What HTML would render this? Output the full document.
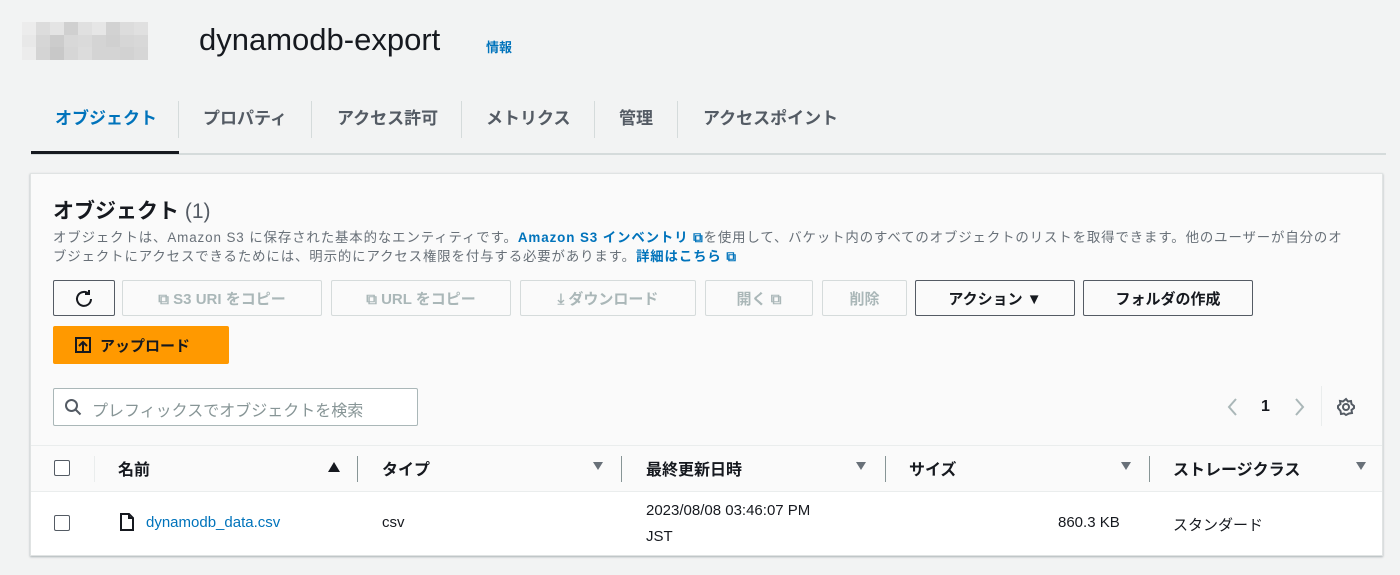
<!DOCTYPE html>
<html><head><meta charset="utf-8"><style>
*{box-sizing:border-box;margin:0;padding:0}
body{width:1400px;height:575px;background:#f2f3f3;font-family:"Liberation Sans","Noto Sans CJK JP",sans-serif;color:#16191f;position:relative;overflow:hidden}
.a{position:absolute}
.blur{left:22px;top:22px;width:126px;height:38px;display:grid;grid-template-columns:repeat(9,1fr);grid-template-rows:repeat(3,1fr)}
.blur i{display:block}
h1{left:199px;top:22px;font-size:31px;font-weight:400;white-space:nowrap}
.info{left:486px;top:37px;font-size:13px;color:#0073bb;font-weight:700}
.tab{top:107px;font-size:17px;font-weight:700;color:#545b64;height:34px;line-height:24px}
.sep{top:101px;width:1px;height:37px;background:#d5dbdb}
.panel{left:30px;top:173px;width:1353px;height:383px;background:#fafafa;border:1px solid #e0e3e3;box-shadow:0 1px 2px rgba(0,28,36,.3)}
.btn{top:280px;height:36px;border:1px solid #d5dbdb;border-radius:2px;font-size:15px;font-weight:700;color:#aab7b8;display:flex;align-items:center;justify-content:center;gap:8px;background:#fafafa}
.btn.on{border-color:#545b64;color:#16191f}
.th{top:456px;font-size:16px;font-weight:700;color:#16191f}
.tri{top:462px;width:0;height:0;border-left:5px solid transparent;border-right:5px solid transparent;border-top:8px solid #687078}
.cs{top:456px;width:1px;height:26px;background:#879596}
.cb{width:16px;height:16px;border:1px solid #545b64;border-radius:2px;background:#fff}
.td{font-size:15px;color:#16191f}
</style></head><body>
<div class="a blur">
<i style="background:#ececec"></i><i style="background:#dcdcdc"></i><i style="background:#e4e4e4"></i><i style="background:#d0d0d0"></i><i style="background:#e0e0e0"></i><i style="background:#e6e6e6"></i><i style="background:#d2d2d2"></i><i style="background:#dcdcdc"></i><i style="background:#e0e0e0"></i>
<i style="background:#e8e8e8"></i><i style="background:#d6d6d6"></i><i style="background:#cccccc"></i><i style="background:#d8d8d8"></i><i style="background:#dadada"></i><i style="background:#d4d4d4"></i><i style="background:#d0d0d0"></i><i style="background:#d6d6d6"></i><i style="background:#d8d8d8"></i>
<i style="background:#ececec"></i><i style="background:#d4d4d4"></i><i style="background:#c8c8c8"></i><i style="background:#d6d6d6"></i><i style="background:#dcdcdc"></i><i style="background:#d4d4d4"></i><i style="background:#d4d4d4"></i><i style="background:#d2d2d2"></i><i style="background:#d6d6d6"></i>
</div>
<h1 class="a">dynamodb-export</h1>
<div class="a info">情報</div>

<div class="a tab" style="left:55px;color:#0073bb">オブジェクト</div>
<div class="a sep" style="left:178px"></div>
<div class="a tab" style="left:203px">プロパティ</div>
<div class="a sep" style="left:311px"></div>
<div class="a tab" style="left:337px">アクセス許可</div>
<div class="a sep" style="left:461px"></div>
<div class="a tab" style="left:486px">メトリクス</div>
<div class="a sep" style="left:594px"></div>
<div class="a tab" style="left:619px">管理</div>
<div class="a sep" style="left:677px"></div>
<div class="a tab" style="left:703px">アクセスポイント</div>
<div class="a" style="left:31px;top:153px;width:1355px;height:2px;background:#d5dbdb"></div>
<div class="a" style="left:31px;top:151px;width:148px;height:3px;background:#16191f"></div>

<div class="a panel"></div>
<div class="a" style="left:53px;top:195px;font-size:21px;font-weight:700">オブジェクト <span style="font-weight:400;color:#545b64">(1)</span></div>
<div class="a" style="left:53px;top:228px;width:1330px;font-size:13.4px;letter-spacing:0.9px;line-height:19px;color:#687078;white-space:nowrap">オブジェクトは、Amazon S3 に保存された基本的なエンティティです。<b style="color:#0073bb">Amazon S3 インベントリ ⧉</b>を使用して、バケット内のすべてのオブジェクトのリストを取得できます。他のユーザーが自分のオ<br>ブジェクトにアクセスできるためには、明示的にアクセス権限を付与する必要があります。<b style="color:#0073bb">詳細はこちら ⧉</b></div>

<div class="a btn on" style="left:53px;width:62px"><svg width="20" height="20" viewBox="0 0 20 20" fill="none" stroke="#16191f" stroke-width="2"><path d="M15 6A7 7 0 1 0 17 11"/><path d="M15 2v4h-4"/></svg></div>
<div class="a btn" style="left:122px;width:200px">⧉ S3 URI をコピー</div>
<div class="a btn" style="left:331px;width:180px">⧉ URL をコピー</div>
<div class="a btn" style="left:520px;width:176px">⤓ ダウンロード</div>
<div class="a btn" style="left:705px;width:108px">開く ⧉</div>
<div class="a btn" style="left:822px;width:85px">削除</div>
<div class="a btn on" style="left:915px;width:160px">アクション ▼</div>
<div class="a btn on" style="left:1083px;width:170px">フォルダの作成</div>
<div class="a btn" style="left:53px;top:326px;width:176px;height:38px;background:#ff9900;border-color:#ff9900;color:#16191f;justify-content:flex-start;padding-left:20px"><svg width="18" height="18" viewBox="0 0 18 18" fill="none" stroke="#16191f" stroke-width="2"><rect x="2" y="2" width="14" height="14"/><path d="M9 15V7M5 10l4-4 4 4"/></svg>アップロード</div>

<div class="a" style="left:53px;top:388px;width:365px;height:38px;border:1px solid #aab7b8;border-radius:2px;background:#fff;font-size:16px;color:#879596;padding:8px 0 0 38px">プレフィックスでオブジェクトを検索</div>
<svg class="a" style="left:64px;top:398px" width="18" height="18" viewBox="0 0 18 18" fill="none" stroke="#545b64" stroke-width="2"><circle cx="7.5" cy="7.5" r="5.5"/><path d="M11.5 11.5l5 5"/></svg>

<svg class="a" style="left:1226px;top:397px" width="14" height="20" viewBox="0 0 14 20" fill="none" stroke="#aab7b8" stroke-width="2"><path d="M10 2L3 10l7 8"/></svg>
<div class="a" style="left:1261px;top:398px;font-size:16px;font-weight:700">1</div>
<svg class="a" style="left:1292px;top:397px" width="14" height="20" viewBox="0 0 14 20" fill="none" stroke="#aab7b8" stroke-width="2"><path d="M4 2l7 8-7 8"/></svg>
<div class="a" style="left:1321px;top:386px;width:1px;height:40px;background:#eaeded"></div>
<svg class="a" style="left:1336px;top:397px" width="20" height="20" viewBox="0 0 20 20" fill="none" stroke="#545b64" stroke-width="2"><circle cx="10" cy="10" r="3"/><path d="M10 2l2 2.5 3-.5.5 3L18 9v2l-2.5 2 .5 3-3 .5L10 18l-2-1.5-3 .5-.5-3L2 11V9l2.5-2L4 4l3 .5z"/></svg>

<div class="a" style="left:31px;top:445px;width:1351px;height:1px;background:#eaeded"></div>
<div class="a" style="left:31px;top:491px;width:1351px;height:64px;background:#fff;border-top:1px solid #eaeded"></div>
<div class="a cb" style="left:54px;top:460px"></div>
<div class="a" style="left:94px;top:456px;width:1px;height:26px;background:#eaeded"></div>
<div class="a th" style="left:118px">名前</div>
<div class="a" style="left:328px;top:462px;border-left:6px solid transparent;border-right:6px solid transparent;border-bottom:10px solid #16191f"></div>
<div class="a cs" style="left:357px"></div>
<div class="a th" style="left:382px">タイプ</div>
<div class="a tri" style="left:593px"></div>
<div class="a cs" style="left:621px"></div>
<div class="a th" style="left:646px">最終更新日時</div>
<div class="a tri" style="left:856px"></div>
<div class="a cs" style="left:885px"></div>
<div class="a th" style="left:909px">サイズ</div>
<div class="a tri" style="left:1121px"></div>
<div class="a cs" style="left:1149px"></div>
<div class="a th" style="left:1173px">ストレージクラス</div>
<div class="a tri" style="left:1356px"></div>

<div class="a cb" style="left:54px;top:515px"></div>
<svg class="a" style="left:119px;top:513px" width="16" height="18" viewBox="0 0 16 18" fill="none" stroke="#16191f" stroke-width="2"><path d="M2 1h8l4 4v12H2z"/><path d="M10 1v4h4"/></svg>
<div class="a td" style="left:146px;top:514px;color:#0073bb">dynamodb_data.csv</div>
<div class="a td" style="left:382px;top:514px">csv</div>
<div class="a td" style="left:646px;top:498px;line-height:26px">2023/08/08 03:46:07 PM<br>JST</div>
<div class="a td" style="left:1058px;top:514px">860.3 KB</div>
<div class="a td" style="left:1173px;top:514px">スタンダード</div>
</body></html>
